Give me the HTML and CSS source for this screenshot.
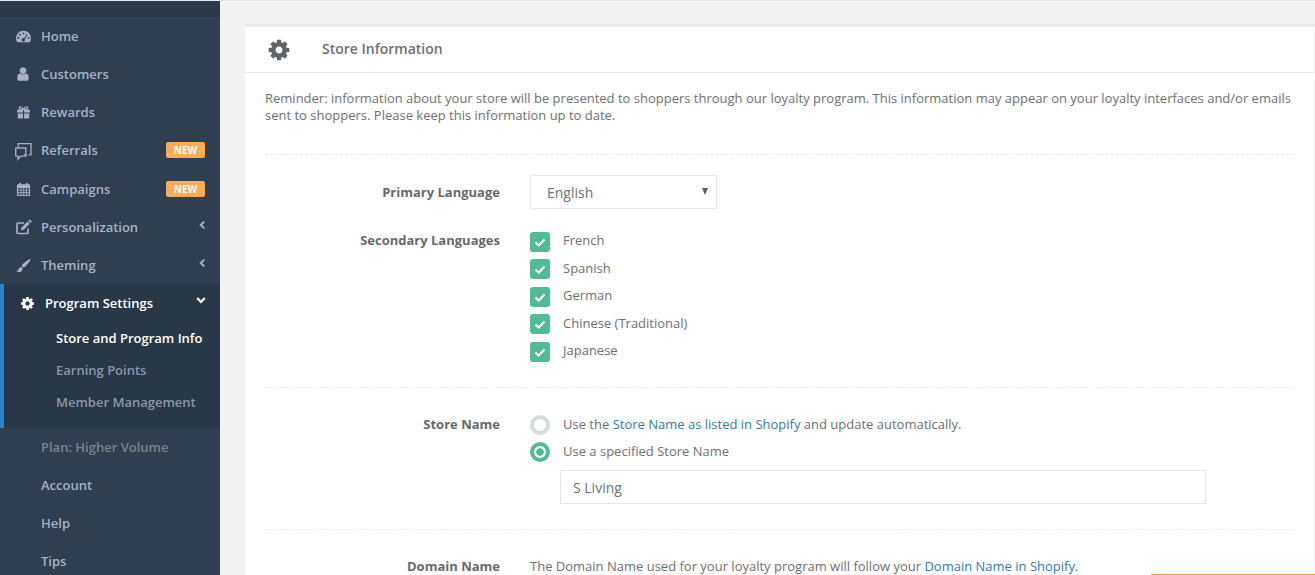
FILE: index.html
```html
<!DOCTYPE html>
<html lang="en">
<head>
<meta charset="utf-8">
<title>Store Information</title>
<link rel="stylesheet" href="styles.css">
</head>
<body>
<div class="app">
  <nav class="sidebar">
    <div class="sidebar-top"></div>
    <a class="item"><svg class="ico" viewBox="0 0 16 14"><path fill-rule="evenodd" d="M8 1a7.700 7.700 0 0 0-8 7.600c0 1.700.5 3 1.300 4.400h13.400c.8-1.400 1.300-2.700 1.300-4.400A7.700 7.700 0 0 0 8 1zM8 2.600a1 1 0 1 1 0 2 1 1 0 0 1 0-2zM4.200 4a1 1 0 1 1 0 2 1 1 0 0 1 0-2zM2.500 7.600a1 1 0 1 1 0 2 1 1 0 0 1 0-2zM13.500 7.600a1 1 0 1 1 0 2 1 1 0 0 1 0-2zM11.300 4.300l.9.500-2.600 5a1.800 1.800 0 1 1-3.200-.1 1.800 1.800 0 0 1 2.400-.7z"/></svg>Home</a>
    <a class="item"><svg class="ico ico-person" viewBox="0 0 1792 1792"><path d="M1536 1399q0 109-62.500 187t-150.500 78h-854q-88 0-150.500-78t-62.500-187q0-85 8.500-160.500t31.500-152 58.500-131 94-89 134.500-34.500q131 128 313 128t313-128q76 0 134.500 34.500t94 89 58.500 131 31.500 152 8.500 160.500zm-256-887q0 159-112.500 271.500t-271.500 112.500-271.500-112.500-112.500-271.500 112.500-271.500 271.500-112.500 271.500 112.500 112.500 271.500z"/></svg>Customers</a>
    <a class="item"><svg class="ico" viewBox="0 0 16 14"><path d="M1.200 4h6.200v3H1.200zM8.600 4h6.200v3H8.600zM1.900 8h5.500v5.300H2.700a.8.800 0 0 1-.8-.8zM8.600 8h5.500v4.500a.8.800 0 0 1-.8.800H8.600z"/><path fill="none" stroke="currentColor" stroke-width="1.300" d="M8 3.700C6.800 1.700 5.700 1 4.800 1 3.900 1 3.400 1.600 3.400 2.300c0 .9.800 1.400 1.800 1.400zM8 3.700c1.200-2 2.300-2.700 3.200-2.700.9 0 1.400.6 1.400 1.300 0 .9-.8 1.400-1.800 1.400z"/></svg>Rewards</a>
    <a class="item item-tall"><svg class="ico ico-bubbles" viewBox="0 0 17 18"><path fill="none" stroke="currentColor" stroke-width="1.300" d="M3.100 4.200V.7h12.900v11.200h-2.600v0M11.600 11.900H9"/><path fill="none" stroke="currentColor" stroke-width="1.300" d="M.7 5h10.100v8.200H5.600l-2.700 3v-3H.7z"/></svg>Referrals<span class="badge">NEW</span></a>
    <a class="item"><svg class="ico" viewBox="0 0 16 14"><path fill-rule="evenodd" d="M2 1.500h1.500V0h2v1.500h5V0h2v1.500H14a1 1 0 0 1 1 1V13a1 1 0 0 1-1 1H2a1 1 0 0 1-1-1V2.500a1 1 0 0 1 1-1zM2.300 5.300v1.900h2.500V5.300zM5.800 5.300v1.900h2V5.300zM8.800 5.300v1.900h2V5.300zM11.700 5.300v1.900h2V5.300zM2.300 8.100V10h2.500V8.100zM5.800 8.100V10h2V8.100zM8.800 8.100V10h2V8.100zM11.700 8.100V10h2V8.100zM2.300 10.900v1.900h2.500v-1.900zM5.800 10.900v1.900h2v-1.900zM8.800 10.900v1.900h2v-1.900zM11.700 10.900v1.900h2v-1.900z"/></svg>Campaigns<span class="badge">NEW</span></a>
    <a class="item"><svg class="ico ico-wide" viewBox="0 0 16 15"><path fill="none" stroke="currentColor" stroke-width="1.700" d="M12 9v4a1 1 0 0 1-1 1H2a1 1 0 0 1-1-1V4.500a1 1 0 0 1 1-1h6"/><path d="M5.500 8l6-6 2.200 2.200-6 6-2.800.6zM12.300 1.200l.9-.9a.7.7 0 0 1 1 0l1.200 1.200a.7.700 0 0 1 0 1l-.9.900z"/></svg>Personalization<svg class="chev" viewBox="0 0 8 10"><path d="M6 1.200 2 5l4 3.800"/></svg></a>
    <a class="item"><svg class="ico" viewBox="0 0 16 15"><path d="M15.300.7c.4.400.2 1-.3 1.700-1.800 2.400-3.700 4.900-5.400 6.500-.7.700-1.500.9-2.100.6L6.200 8.200c-.2-.6 0-1.300.7-2C8.700 4.400 12.300 2 14 .8c.6-.4 1-.4 1.300-.1zM5.500 9.200l1.600 1.400c0 2.300-1.700 3.900-4 3.900-1.200 0-2.300-.6-2.800-1.500 1.300 0 2-.500 2.400-1.600.4-1.300 1.400-2.100 2.800-2.200z"/></svg>Theming<svg class="chev" viewBox="0 0 8 10"><path d="M6 1.200 2 5l4 3.800"/></svg></a>
    <div class="group">
      <a class="group-head"><svg class="ico ico-small" viewBox="0 0 1792 1792"><path d="M1152 896q0-106-75-181t-181-75-181 75-75 181 75 181 181 75 181-75 75-181zm512-109v222q0 12-8 23t-20 13l-185 28q-19 54-39 91 35 50 107 138 10 12 10 25t-9 23q-27 37-99 108t-94 71q-12 0-26-9l-138-108q-44 23-91 38-16 136-29 186-7 28-36 28h-222q-14 0-24.500-8.500t-11.500-21.500l-28-184q-49-16-90-37l-141 107q-10 9-25 9-14 0-25-11-126-114-165-168-7-10-7-23 0-12 8-23 15-21 51-66.500t54-70.500q-27-50-41-99l-183-27q-13-2-21-12.500t-8-23.500v-222q0-12 8-23t19-13l186-28q14-46 39-92-40-57-107-138-10-12-10-24 0-10 9-23 26-36 98.500-107.500t94.500-71.500q13 0 26 10l138 107q44-23 91-38 16-136 29-186 7-28 36-28h222q14 0 24.500 8.500t11.500 21.500l28 184q49 16 90 37l142-107q9-9 24-9 13 0 25 10 129 119 165 170 7 8 7 22 0 12-8 23-15 21-51 66.500t-54 70.500q26 50 41 98l183 28q13 2 21 12.500t8 23.500z"/></svg>Program Settings<svg class="chev chev-down" viewBox="0 0 10 8"><path d="M1.200 2 5 6l3.800-4"/></svg></a>
      <a class="sub sub-active">Store and Program Info</a>
      <a class="sub">Earning Points</a>
      <a class="sub">Member Management</a>
    </div>
    <a class="item item-plain item-muted">Plan: Higher Volume</a>
    <a class="item item-plain">Account</a>
    <a class="item item-plain">Help</a>
    <a class="item item-plain">Tips</a>
  </nav>
  <main class="main">
    <section class="card">
      <header class="card-head">
        <svg class="head-ico" viewBox="0 0 1792 1792"><path d="M1152 896q0-106-75-181t-181-75-181 75-75 181 75 181 181 75 181-75 75-181zm512-109v222q0 12-8 23t-20 13l-185 28q-19 54-39 91 35 50 107 138 10 12 10 25t-9 23q-27 37-99 108t-94 71q-12 0-26-9l-138-108q-44 23-91 38-16 136-29 186-7 28-36 28h-222q-14 0-24.500-8.500t-11.500-21.500l-28-184q-49-16-90-37l-141 107q-10 9-25 9-14 0-25-11-126-114-165-168-7-10-7-23 0-12 8-23 15-21 51-66.500t54-70.500q-27-50-41-99l-183-27q-13-2-21-12.500t-8-23.500v-222q0-12 8-23t19-13l186-28q14-46 39-92-40-57-107-138-10-12-10-24 0-10 9-23 26-36 98.500-107.500t94.500-71.500q13 0 26 10l138 107q44-23 91-38 16-136 29-186 7-28 36-28h222q14 0 24.500 8.500t11.500 21.500l28 184q49 16 90 37l142-107q9-9 24-9 13 0 25 10 129 119 165 170 7 8 7 22 0 12-8 23-15 21-51 66.500t-54 70.500q26 50 41 98l183 28q13 2 21 12.500t8 23.500z"/></svg>
        <h1 class="card-title">Store Information</h1>
      </header>
      <div class="card-body">
        <p class="reminder">Reminder: information about your store will be presented to shoppers through our loyalty program. This information may appear on your loyalty interfaces and/or emails sent to shoppers. Please keep this information up to date.</p>
        <hr class="rule rule-a">
        <div class="row row-primary">
          <div class="label label-select">Primary Language</div>
          <div class="select-wrap">
            <select class="select"><option>English</option></select>
            <span class="select-arrow"></span>
          </div>
        </div>
        <div class="row row-secondary">
          <div class="label label-check">Secondary Languages</div>
          <div class="checks">
            <label class="opt"><span class="box"><svg viewBox="0 0 20 20"><path d="M5.500 10.500 8.700 13.500 14.500 7.500"/></svg></span>French</label>
            <label class="opt"><span class="box"><svg viewBox="0 0 20 20"><path d="M5.500 10.500 8.700 13.500 14.500 7.500"/></svg></span>Spanish</label>
            <label class="opt"><span class="box"><svg viewBox="0 0 20 20"><path d="M5.500 10.500 8.700 13.500 14.500 7.500"/></svg></span>German</label>
            <label class="opt"><span class="box"><svg viewBox="0 0 20 20"><path d="M5.500 10.500 8.700 13.500 14.500 7.500"/></svg></span>Chinese (Traditional)</label>
            <label class="opt"><span class="box"><svg viewBox="0 0 20 20"><path d="M5.500 10.500 8.700 13.500 14.500 7.500"/></svg></span>Japanese</label>
          </div>
        </div>
        <hr class="rule rule-b">
        <div class="row row-store">
          <div class="label label-store">Store Name</div>
          <div class="radios">
            <label class="opt"><span class="radio"></span><span class="radio-text">Use the <a class="link">Store Name as listed in Shopify</a> and update automatically.</span></label>
            <label class="opt"><span class="radio radio-on"></span><span class="radio-text">Use a specified Store Name</span></label>
            <input class="text-input" type="text" value="S Living">
          </div>
        </div>
        <hr class="rule rule-c">
        <div class="row row-domain">
          <div class="label">Domain Name</div>
          <div>The Domain Name used for your loyalty program will follow your <a class="link">Domain Name in Shopify</a>.</div>
        </div>
      </div>
    </section>
    <div class="orange"></div>
  </main>
</div>
</body>
</html>
```

FILE: styles.css
```css
* { box-sizing: border-box; }
html, body { margin: 0; height: 100%; overflow: hidden; }
body { font-family: "Open Sans", sans-serif; font-size: 13px; line-height: 17px; color: #6e7173; background: #f3f3f4; }
.app { display: flex; height: 575px; overflow: hidden; }

.sidebar { flex: 0 0 220px; width: 220px; background: #2f3f50; color: #a7b1c2; font-weight: 600; }
.sidebar-top { height: 17px; background: #2b3a49; border-top: 1px solid #e7eaec; }
.item { display: flex; align-items: center; height: 38px; padding: 0 15px 0 16px; }
.item-tall { height: 39px; padding-bottom: 1px; }
.item-plain { padding-left: 41px; }
.item-muted { color: #7b8289; }
.ico { flex: 0 0 15px; width: 15px; height: 15px; margin-right: 10px; fill: currentColor; }
.ico-person { flex-basis: 16px; width: 16px; height: 16px; margin-left: -1px; }
.ico-wide { flex-basis: 16px; width: 16px; height: 16px; margin-right: 9px; }
.ico-bubbles { flex-basis: 17px; width: 17px; height: 18px; margin: 3px 9px 0 -1px; }
.badge { margin-left: auto; width: 39px; height: 16px; border-radius: 2px; background: #f8ac59; color: #fff; font-size: 10px; font-weight: 700; line-height: 16px; text-align: center; }
.chev { margin-left: auto; margin-top: -5px; margin-right: -1px; width: 7px; height: 10px; fill: none; stroke: currentColor; stroke-width: 2.200; }
.group { height: 144px; background: #293846; border-left: 4px solid #3182c6; }
.group-head { display: flex; align-items: center; height: 38px; padding-left: 16px; padding-right: 14px; color: #fff; }
.ico-small { flex: 0 0 15px; width: 15px; height: 15px; margin-right: 10px; }
.chev-down { width: 10px; height: 8px; margin-top: -6px; margin-right: 0; stroke-width: 2.200; }
.sub { display: block; height: 32px; padding-left: 52px; line-height: 32px; color: #8a96a6; }
.sub-active { color: #fff; }

.main { flex: 1; min-width: 0; position: relative; padding: 24px 1px 0 25px; border-top: 1px solid #e7eaec; }
.card { background: #fff; border-top: 3px solid #e7eaec; margin-top: -1px; height: 560px; }
.card-head { display: flex; align-items: center; height: 46px; padding-left: 22px; border-bottom: 1px solid #e7eaec; }
.head-ico { flex: 0 0 24px; width: 24px; height: 24px; margin-right: 31px; fill: #5f6367; }
.card-title { margin: 0 0 2px; font-size: 14px; line-height: 17px; font-weight: 600; color: #6e7173; }
.card-body { padding: 17px 20px 0 20px; }
.reminder { margin: 0; }
.rule { margin: 0; border: 0; border-top: 1px dashed #e7eaec; }
.rule-a { margin-top: 30px; }
.rule-b { margin-top: 25px; }
.rule-c { margin-top: 25px; }
.row { display: grid; grid-template-columns: 235px 1fr; column-gap: 30px; }
.row-primary { margin-top: 20px; }
.row-secondary { margin-top: 23px; }
.row-store { margin-top: 27px; }
.row-domain { margin-top: 28px; }
.label { text-align: right; font-weight: 700; color: #676a6c; }
.label-select { padding-top: 9px; }
.label-store { padding-top: 1px; }
.select-wrap { position: relative; width: 187px; height: 34px; }
.select { appearance: none; -webkit-appearance: none; width: 100%; height: 100%; padding: 0 16px; border: 1px solid #e5e6e7; border-radius: 0; background: #fff; font: 14px "Open Sans", sans-serif; color: #6e7173; }
.select-arrow { position: absolute; top: 13px; right: 9px; width: 0; height: 0; border-left: 3px solid transparent; border-right: 3px solid transparent; border-top: 7px solid #5a5e62; }
.checks { display: flex; flex-direction: column; row-gap: 7.500px; }
.opt { display: flex; align-items: flex-start; height: 20px; }
.box { flex: 0 0 20px; width: 20px; height: 20px; margin-top: -0.1px; margin-right: 13px; border-radius: 3px; background: #52bb95; }
.box svg { display: block; width: 20px; height: 20px; fill: none; stroke: #fff; stroke-width: 2; }
.radios { display: flex; flex-direction: column; row-gap: 7px; }
.radio { flex: 0 0 20px; width: 20px; height: 20px; margin-right: 13px; border-radius: 50%; border: 4px solid #d9dcde; background: #fff; }
.radio-on { border-color: #52bb95; background: radial-gradient(circle, #52bb95 0 3.500px, #fff 4px); }
.radio-text { padding-top: 1px; }
.text-input { width: 646px; height: 34px; margin: 1px 0 0 30px; padding: 0 12px; border: 1px solid #e5e6e7; font: 14px "Open Sans", sans-serif; color: #6e7173; outline: 0; }
.link { color: #337ab7; }
.orange { position: absolute; right: 0; bottom: 0; width: 164px; height: 1px; background: #dc9a2a; }
```
